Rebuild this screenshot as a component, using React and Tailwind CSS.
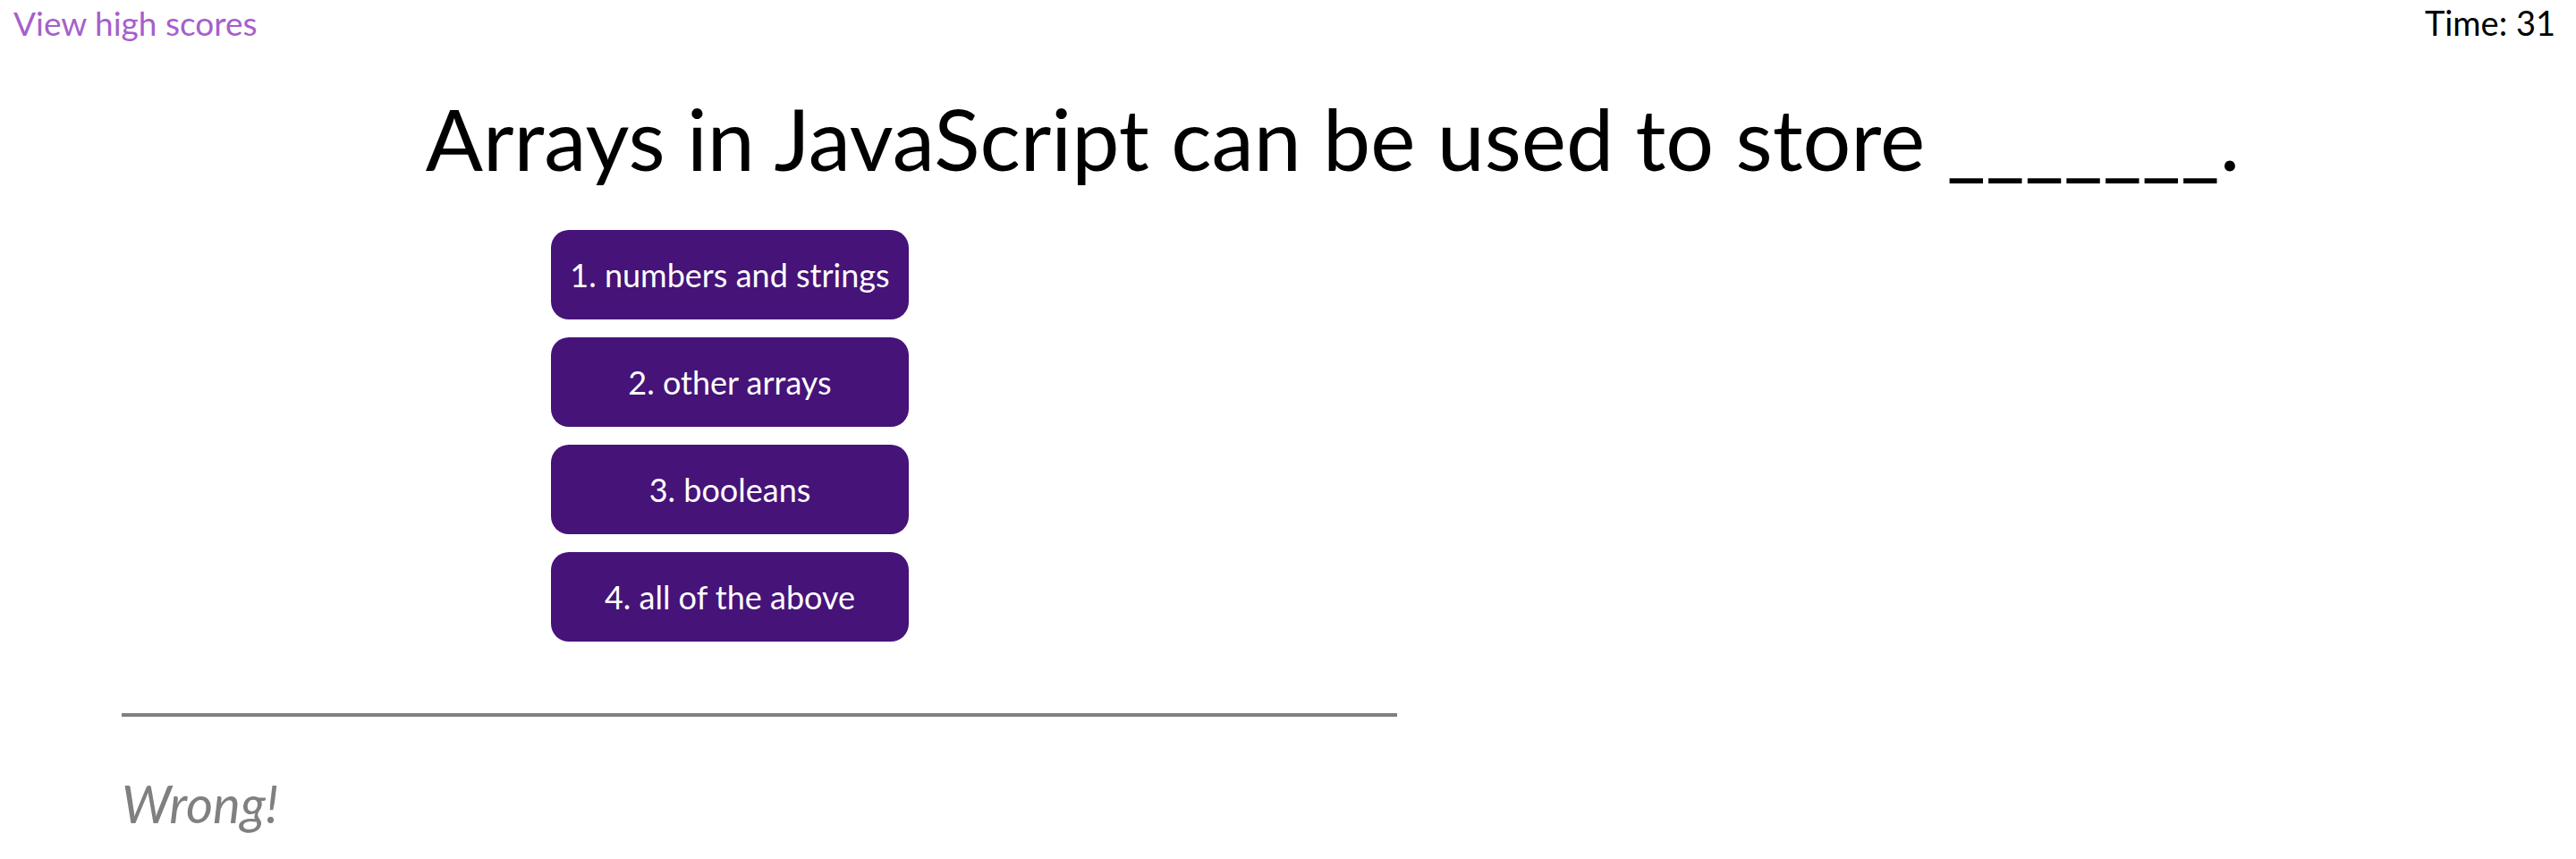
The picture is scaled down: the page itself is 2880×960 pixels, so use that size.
import React from 'react';

const choices = ['1. numbers and strings', '2. other arrays', '3. booleans', '4. all of the above'];

export default function App() {
  return (
    <div className="min-h-screen bg-white font-['Lato','Open_Sans',sans-serif] text-black">
      {/* top bar */}
      <header className="flex items-start justify-between pl-[15px] pr-[23px] pt-[2px]">
        <a href="#" className="text-[37px] leading-[48px] text-[#a65fcc]">View high scores</a>
        <span className="text-[38px] leading-[46px]">Time: 31</span>
      </header>

      <main className="flex flex-col">
        <h1 className="mt-[46px] pl-[100px] text-center text-[95px] leading-[116px] font-normal">
          Arrays in JavaScript can be used to store _______.
        </h1>

        <div className="ml-[616px] mt-[45px] flex w-[400px] flex-col gap-[20px]">
          {choices.map(c => (
            <button
              key={c}
              className="h-[100px] w-full rounded-[20px] bg-[#461379] text-[36px] text-white"
            >
              {c}
            </button>
          ))}
        </div>

        <div className="ml-[136px] mt-[80px] w-[1426px]">
          <div className="h-[4px] bg-[#808080]" />
          <p className="mt-[62px] text-[58px] leading-[70px] italic text-[#808080]">Wrong!</p>
        </div>
      </main>
    </div>
  );
}
